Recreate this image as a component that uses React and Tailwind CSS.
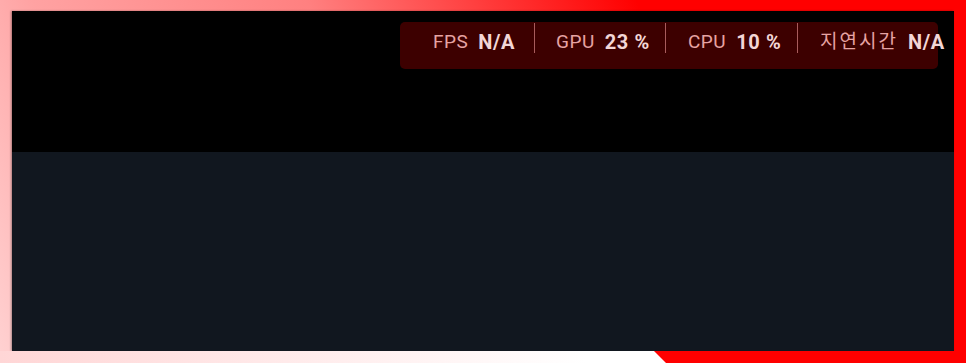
import React from "react";

function Sep() {
  return <div className="w-px h-[30px] mt-[1px] bg-[#a85c5c] shrink-0" />;
}

function Stat({ label, value, width, pl, labelTrack = "tracking-[0.5px]" }) {
  return (
    <div
      className={`flex items-center h-[31px] pt-[8px] whitespace-nowrap shrink-0 ${width} ${pl}`}
    >
      <span className={`text-[19px] leading-none ${labelTrack} text-[#e6a3a3] font-normal`}>{label}</span>
      <span className="ml-[10px] text-[20px] leading-none tracking-[0.6px] text-[#f3d6d6] font-bold">{value}</span>
    </div>
  );
}

export default function App() {
  return (
    <div
      className="relative w-[966px] h-[363px] overflow-hidden flex flex-col bg-[linear-gradient(70deg,#ffd2d2_0%,#ffa2a2_15%,#ff8080_40%,#ff0000_70%)]"
      style={{ fontFamily: "Roboto, 'Noto Sans CJK KR', sans-serif" }}
    >
      <div className="pt-[11px] px-[12px]">
        <div className="h-[340px] flex flex-col shadow-[-1px_0_2px_rgba(0,0,0,0.35)]">
          <div className="h-[141px] bg-black" />
          <div className="flex-1 bg-[#11171f]" />
        </div>
      </div>
      <div className="h-[12px] bg-[#ff0000]">
        <div className="h-full w-[666px] bg-[linear-gradient(to_right,#ffd6d6,#ffffff_88%)] [clip-path:polygon(0_0,654px_0,666px_100%,0_100%)]" />
      </div>

      <div className="absolute left-[400px] top-[22px] w-[538px] h-[47px] rounded-[5px] bg-[#3d0000]">
        <div className="flex items-start h-[31px]">
          <Stat label="FPS" value="N/A" width="w-[134px]" pl="pl-[33px]" />
          <Sep />
          <Stat label="GPU" value="23 %" width="w-[130px]" pl="pl-[21px]" />
          <Sep />
          <Stat label="CPU" value="10 %" width="w-[131px]" pl="pl-[22px]" />
          <Sep />
          <Stat label="지연시간" value="N/A" width="w-[160px]" pl="pl-[22px]" labelTrack="tracking-[2px]" />
        </div>
      </div>
    </div>
  );
}
